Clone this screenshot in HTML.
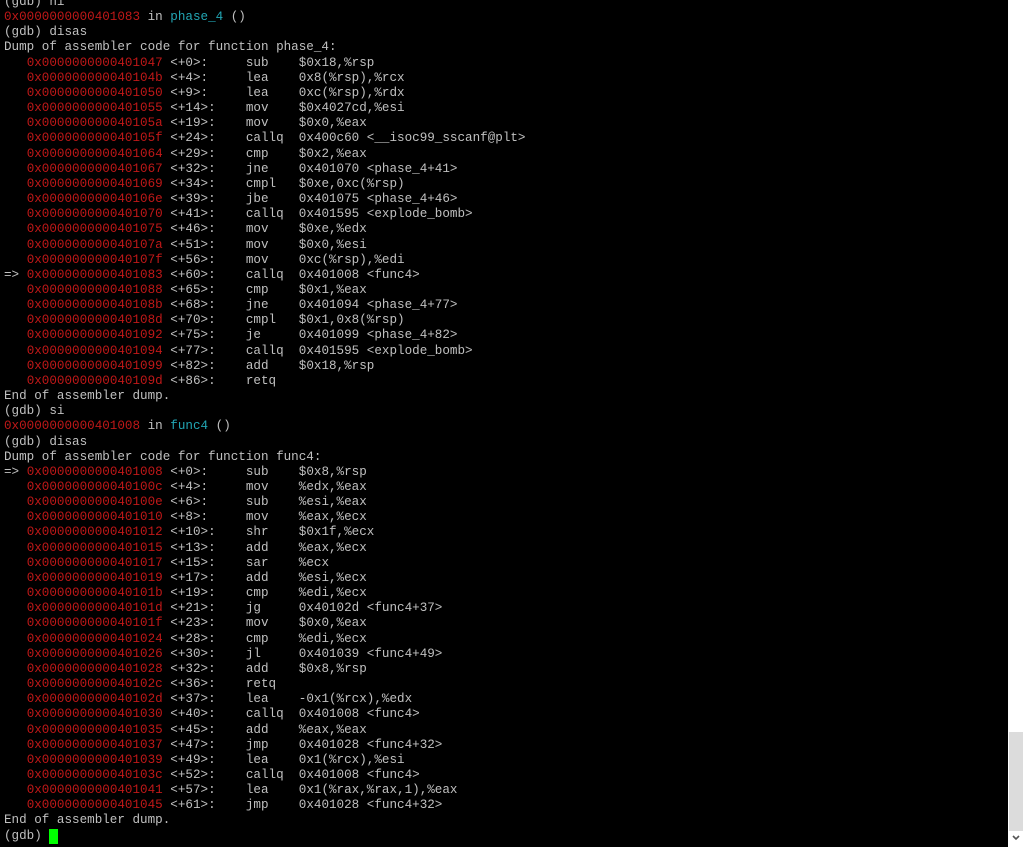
<!DOCTYPE html>
<html><head><meta charset="utf-8"><style>
html,body{margin:0;padding:0;}
body{width:1024px;height:847px;background:#000;position:relative;overflow:hidden;}
pre{position:absolute;left:4px;top:-5px;margin:0;font-family:"Liberation Mono","Courier New",monospace;font-size:12.6px;line-height:15.15px;color:#c0c0c0;}
#side{position:absolute;left:1008px;top:0;width:16px;height:847px;background:#fff;}
#thumb{position:absolute;left:1009px;top:732px;width:14px;height:99px;background:#dcdcdc;}
#arr{position:absolute;left:1012px;top:834px;width:8px;height:8px;}
.r{color:#c01818;}
.c{color:#22a6b4;}
.cur{display:inline-block;width:9px;height:15px;background:#00ff00;vertical-align:top;}
</style></head><body>
<div id="side"></div><div id="thumb"></div>
<svg id="arr" viewBox="0 0 8 8"><path d="M1 2 L4 5 L7 2" stroke="#555" stroke-width="1.6" fill="none"/></svg>
<pre>(gdb) ni
<span class="r">0x0000000000401083</span> in <span class="c">phase_4</span> ()
(gdb) disas
Dump of assembler code for function phase_4:
   <span class="r">0x0000000000401047</span> &lt;+0&gt;:     sub    $0x18,%rsp
   <span class="r">0x000000000040104b</span> &lt;+4&gt;:     lea    0x8(%rsp),%rcx
   <span class="r">0x0000000000401050</span> &lt;+9&gt;:     lea    0xc(%rsp),%rdx
   <span class="r">0x0000000000401055</span> &lt;+14&gt;:    mov    $0x4027cd,%esi
   <span class="r">0x000000000040105a</span> &lt;+19&gt;:    mov    $0x0,%eax
   <span class="r">0x000000000040105f</span> &lt;+24&gt;:    callq  0x400c60 &lt;__isoc99_sscanf@plt&gt;
   <span class="r">0x0000000000401064</span> &lt;+29&gt;:    cmp    $0x2,%eax
   <span class="r">0x0000000000401067</span> &lt;+32&gt;:    jne    0x401070 &lt;phase_4+41&gt;
   <span class="r">0x0000000000401069</span> &lt;+34&gt;:    cmpl   $0xe,0xc(%rsp)
   <span class="r">0x000000000040106e</span> &lt;+39&gt;:    jbe    0x401075 &lt;phase_4+46&gt;
   <span class="r">0x0000000000401070</span> &lt;+41&gt;:    callq  0x401595 &lt;explode_bomb&gt;
   <span class="r">0x0000000000401075</span> &lt;+46&gt;:    mov    $0xe,%edx
   <span class="r">0x000000000040107a</span> &lt;+51&gt;:    mov    $0x0,%esi
   <span class="r">0x000000000040107f</span> &lt;+56&gt;:    mov    0xc(%rsp),%edi
=&gt; <span class="r">0x0000000000401083</span> &lt;+60&gt;:    callq  0x401008 &lt;func4&gt;
   <span class="r">0x0000000000401088</span> &lt;+65&gt;:    cmp    $0x1,%eax
   <span class="r">0x000000000040108b</span> &lt;+68&gt;:    jne    0x401094 &lt;phase_4+77&gt;
   <span class="r">0x000000000040108d</span> &lt;+70&gt;:    cmpl   $0x1,0x8(%rsp)
   <span class="r">0x0000000000401092</span> &lt;+75&gt;:    je     0x401099 &lt;phase_4+82&gt;
   <span class="r">0x0000000000401094</span> &lt;+77&gt;:    callq  0x401595 &lt;explode_bomb&gt;
   <span class="r">0x0000000000401099</span> &lt;+82&gt;:    add    $0x18,%rsp
   <span class="r">0x000000000040109d</span> &lt;+86&gt;:    retq
End of assembler dump.
(gdb) si
<span class="r">0x0000000000401008</span> in <span class="c">func4</span> ()
(gdb) disas
Dump of assembler code for function func4:
=&gt; <span class="r">0x0000000000401008</span> &lt;+0&gt;:     sub    $0x8,%rsp
   <span class="r">0x000000000040100c</span> &lt;+4&gt;:     mov    %edx,%eax
   <span class="r">0x000000000040100e</span> &lt;+6&gt;:     sub    %esi,%eax
   <span class="r">0x0000000000401010</span> &lt;+8&gt;:     mov    %eax,%ecx
   <span class="r">0x0000000000401012</span> &lt;+10&gt;:    shr    $0x1f,%ecx
   <span class="r">0x0000000000401015</span> &lt;+13&gt;:    add    %eax,%ecx
   <span class="r">0x0000000000401017</span> &lt;+15&gt;:    sar    %ecx
   <span class="r">0x0000000000401019</span> &lt;+17&gt;:    add    %esi,%ecx
   <span class="r">0x000000000040101b</span> &lt;+19&gt;:    cmp    %edi,%ecx
   <span class="r">0x000000000040101d</span> &lt;+21&gt;:    jg     0x40102d &lt;func4+37&gt;
   <span class="r">0x000000000040101f</span> &lt;+23&gt;:    mov    $0x0,%eax
   <span class="r">0x0000000000401024</span> &lt;+28&gt;:    cmp    %edi,%ecx
   <span class="r">0x0000000000401026</span> &lt;+30&gt;:    jl     0x401039 &lt;func4+49&gt;
   <span class="r">0x0000000000401028</span> &lt;+32&gt;:    add    $0x8,%rsp
   <span class="r">0x000000000040102c</span> &lt;+36&gt;:    retq
   <span class="r">0x000000000040102d</span> &lt;+37&gt;:    lea    -0x1(%rcx),%edx
   <span class="r">0x0000000000401030</span> &lt;+40&gt;:    callq  0x401008 &lt;func4&gt;
   <span class="r">0x0000000000401035</span> &lt;+45&gt;:    add    %eax,%eax
   <span class="r">0x0000000000401037</span> &lt;+47&gt;:    jmp    0x401028 &lt;func4+32&gt;
   <span class="r">0x0000000000401039</span> &lt;+49&gt;:    lea    0x1(%rcx),%esi
   <span class="r">0x000000000040103c</span> &lt;+52&gt;:    callq  0x401008 &lt;func4&gt;
   <span class="r">0x0000000000401041</span> &lt;+57&gt;:    lea    0x1(%rax,%rax,1),%eax
   <span class="r">0x0000000000401045</span> &lt;+61&gt;:    jmp    0x401028 &lt;func4+32&gt;
End of assembler dump.
(gdb) <span class="cur"></span></pre>
</body></html>
